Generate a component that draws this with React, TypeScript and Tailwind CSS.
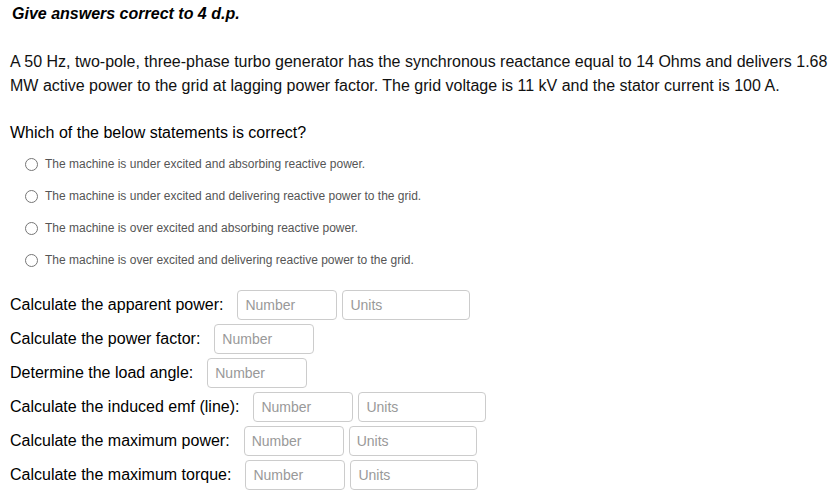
import React from "react";

const options = [
  "The machine is under excited and absorbing reactive power.",
  "The machine is under excited and delivering reactive power to the grid.",
  "The machine is over excited and absorbing reactive power.",
  "The machine is over excited and delivering reactive power to the grid.",
];

type Row = { label: string; units: boolean };
const rows: Row[] = [
  { label: "Calculate the apparent power:", units: true },
  { label: "Calculate the power factor:", units: false },
  { label: "Determine the load angle:", units: false },
  { label: "Calculate the induced emf (line):", units: true },
  { label: "Calculate the maximum power:", units: true },
  { label: "Calculate the maximum torque:", units: true },
];

function Input({ ph, w }: { ph: string; w: string }) {
  return (
    <div
      className={`${w} h-[30px] border border-[#cccccc] rounded-[4px] bg-white flex items-center pl-[7px] text-[14px] text-[#999999]`}
    >
      {ph}
    </div>
  );
}

export default function App() {
  return (
    <div
      className="w-[828px] h-[503px] bg-white text-black overflow-hidden"
      style={{ fontFamily: '"Liberation Sans", Arial, sans-serif' }}
    >
      <div className="pl-[12px] pt-[4px] text-[16px] font-bold italic leading-[20px]">
        Give answers correct to 4 d.p.
      </div>
      <div className="pl-[10px] w-[840px] mt-[26px] text-[16px] leading-[24px] text-[#111]">
        A 50 Hz, two-pole, three-phase turbo generator has the synchronous reactance equal to 14 Ohms and delivers 1.68 MW active power to the grid at lagging power factor. The grid voltage is 11 kV and the stator current is 100 A.
      </div>
      <div className="pl-[10px] mt-[24px] text-[16px] leading-[22px]">
        Which of the below statements is correct?
      </div>
      <div className="mt-[4px] flex flex-col">
        {options.map((o) => (
          <div key={o} className="h-[32px] flex items-center pl-[25px]">
            <span className="w-[13px] h-[13px] rounded-full border border-[#767676] bg-white mr-[7px]" />
            <span className="text-[12px] text-[#555555]">{o}</span>
          </div>
        ))}
      </div>
      <div className="mt-[14px] flex flex-col gap-[4px] pl-[10px]">
        {rows.map((r) => (
          <div key={r.label} className="h-[30px] flex items-center">
            <span className="text-[16px] mr-[14px]">{r.label}</span>
            <Input ph="Number" w="w-[100px]" />
            {r.units && (
              <div className="ml-[5px]">
                <Input ph="Units" w="w-[128px]" />
              </div>
            )}
          </div>
        ))}
      </div>
    </div>
  );
}
